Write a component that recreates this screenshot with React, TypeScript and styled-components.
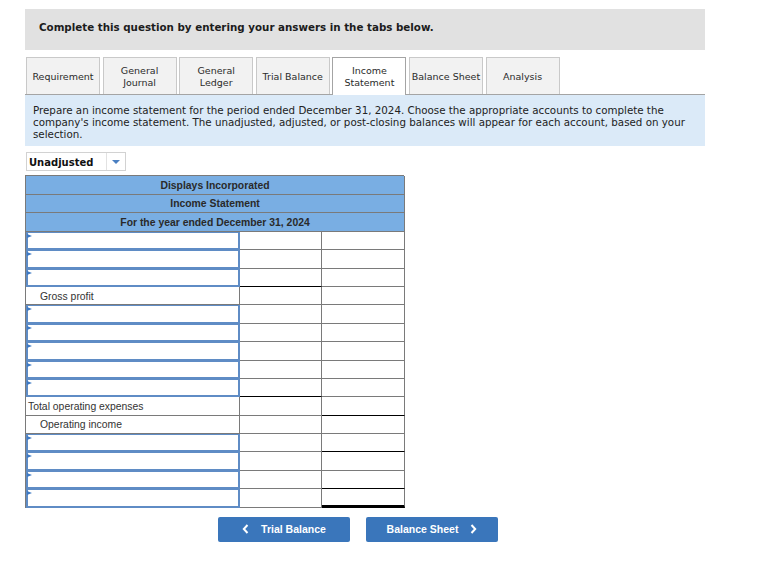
import React from "react";
import styled, { createGlobalStyle, css } from "styled-components";

const GlobalStyle = createGlobalStyle`
  body {
    margin: 0;
    background: #ffffff;
    font-family: "DejaVu Sans", Verdana, sans-serif;
  }
`;

const Page = styled.div`
  width: 680px;
  padding: 9px 0 0 25px;
`;

const Banner = styled.div`
  height: 41px;
  box-sizing: border-box;
  background: #e1e1e1;
  display: flex;
  align-items: center;
  padding: 0 0 6px 14px;
  font-size: 10.3px;
  font-weight: bold;
  color: #1c1c1c;
`;

const TabBar = styled.div`
  margin-top: 7px;
  display: flex;
  gap: 2.6px;
  padding-left: 1px;
  height: 37px;
  border-bottom: 1px solid #a4a4a4;
`;

const Tab = styled.div<{ $active?: boolean }>`
  width: 74px;
  box-sizing: border-box;
  height: 37px;
  padding-top: 1px;
  border: 1px solid #c9c9c9;
  border-bottom: none;
  background: #f2f2f2;
  display: flex;
  align-items: center;
  justify-content: center;
  text-align: center;
  font-size: 9.5px;
  line-height: 12px;
  color: #2b2b2b;
  white-space: pre-line;
  ${(p) =>
    p.$active &&
    css`
      background: #ffffff;
      border-color: #a4a4a4;
      height: 38px;
      position: relative;
      z-index: 1;
    `}
`;

const Instructions = styled.div`
  height: 51px;
  box-sizing: border-box;
  background: #dbeaf8;
  padding: 9px 8px 0 8px;
  font-size: 10.3px;
  line-height: 12px;
  color: #222;
`;

const Select = styled.div`
  margin-top: 6px;
  margin-left: 1px;
  width: 100px;
  height: 19px;
  box-sizing: border-box;
  border: 1px solid #d2d2d2;
  display: flex;
  align-items: center;
  background: #fff;
`;

const SelectText = styled.div`
  flex: 1;
  padding: 1px 0 0 2px;
  font-size: 10px;
  font-weight: bold;
  color: #111;
`;

const SelectArrow = styled.div`
  width: 18px;
  height: 100%;
  border-left: 1px solid #e2e2e2;
  display: flex;
  align-items: center;
  justify-content: center;

  &::after {
    content: "";
    border-left: 4px solid transparent;
    border-right: 4px solid transparent;
    border-top: 4px solid #4a7fc2;
  }
`;

const Sheet = styled.div`
  margin-top: 4px;
  width: 379px;
  display: grid;
  grid-template-columns: 214px 82px 83px;
  border-left: 1px solid #7a7a7a;
  border-top: 1px solid #7a7a7a;
  box-sizing: border-box;
  font-family: "Liberation Sans", Arial, sans-serif;
`;

const HeadCell = styled.div`
  grid-column: 1 / -1;
  height: 18.6px;
  box-sizing: border-box;
  padding-top: 1px;
  background: #79aee3;
  border-right: 1px solid #7a7a7a;
  border-bottom: 1px solid #7a7a7a;
  display: flex;
  align-items: center;
  justify-content: center;
  font-size: 10.4px;
  font-weight: bold;
  color: #2a2a2a;
`;

const LabelCell = styled.div<{ $indent?: boolean }>`
  height: 18.4px;
  box-sizing: border-box;
  border-right: 1px solid #7a7a7a;
  border-bottom: 1px solid #7a7a7a;
  display: flex;
  align-items: center;
  padding-top: 1px;
  padding-left: ${(p) => (p.$indent ? "14px" : "2px")};
  font-size: 10.4px;
  color: #333;
`;

const InputCell = styled.div`
  height: 18.4px;
  box-sizing: border-box;
  border-right: 1px solid #7a7a7a;
  border-bottom: 1px solid #7a7a7a;
  position: relative;

  &::before {
    content: "";
    position: absolute;
    inset: 0 -1px -1px 0;
    border: 2px solid #5f8cc5;
    border-top-width: 1px;
  }

  &::after {
    content: "";
    position: absolute;
    left: 1px;
    top: 2px;
    border-top: 2.5px solid transparent;
    border-bottom: 2.5px solid transparent;
    border-left: 5px solid #3f7ac4;
  }
`;

const AmountCell = styled.div<{ $rule?: "single" | "double" }>`
  height: 18.4px;
  box-sizing: border-box;
  border-right: 1px solid #7a7a7a;
  border-bottom: 1px solid #7a7a7a;
  background: #fff;
  ${(p) =>
    p.$rule === "single" &&
    css`
      border-bottom: 1px solid #000;
    `}
  ${(p) =>
    p.$rule === "double" &&
    css`
      border-bottom: 3px solid #000;
    `}
`;

const Nav = styled.div`
  margin-top: 9px;
  padding-left: 193px;
  display: flex;
  gap: 16px;
`;

const NavButton = styled.button`
  width: 132px;
  height: 25px;
  border: none;
  border-radius: 2px;
  background: #3a76bb;
  color: #fff;
  font-family: "Liberation Sans", Arial, sans-serif;
  font-size: 10.5px;
  font-weight: bold;
  display: flex;
  align-items: center;
  justify-content: center;
  gap: 12px;
  cursor: pointer;
`;

type Row = {
  label?: string;
  indent?: boolean;
  mid?: "single" | "double";
  right?: "single" | "double";
};

const rows: Row[] = [
  {},
  {},
  { mid: "single" },
  { label: "Gross profit", indent: true },
  {},
  {},
  {},
  {},
  { mid: "single" },
  { label: "Total operating expenses", right: "single" },
  { label: "Operating income", indent: true },
  { right: "single" },
  {},
  { right: "single" },
  { right: "double" },
];

const tabs = [
  "Requirement",
  "General\nJournal",
  "General\nLedger",
  "Trial Balance",
  "Income\nStatement",
  "Balance Sheet",
  "Analysis",
];

const Chevron = ({ dir }: { dir: "left" | "right" }) => (
  <svg width="7" height="10" viewBox="0 0 7 10">
    <path
      d={dir === "left" ? "M5.5 1 L1.8 5 L5.5 9" : "M1.5 1 L5.2 5 L1.5 9"}
      fill="none"
      stroke="#fff"
      strokeWidth="2"
    />
  </svg>
);

export default function App() {
  return (
    <Page>
      <GlobalStyle />
      <Banner>Complete this question by entering your answers in the tabs below.</Banner>
      <TabBar>
        {tabs.map((t) => (
          <Tab key={t} $active={t === "Income\nStatement"}>
            {t}
          </Tab>
        ))}
      </TabBar>
      <Instructions>
        Prepare an income statement for the period ended December 31, 2024. Choose the appropriate
        accounts to complete the company's income statement. The unadjusted, adjusted, or
        post-closing balances will appear for each account, based on your selection.
      </Instructions>
      <Select>
        <SelectText>Unadjusted</SelectText>
        <SelectArrow />
      </Select>
      <Sheet>
        <HeadCell>Displays Incorporated</HeadCell>
        <HeadCell>Income Statement</HeadCell>
        <HeadCell>For the year ended December 31, 2024</HeadCell>
        {rows.map((r, i) => (
          <React.Fragment key={i}>
            {r.label ? (
              <LabelCell $indent={r.indent}>{r.label}</LabelCell>
            ) : (
              <InputCell />
            )}
            <AmountCell $rule={r.mid} />
            <AmountCell $rule={r.right} />
          </React.Fragment>
        ))}
      </Sheet>
      <Nav>
        <NavButton>
          <Chevron dir="left" />
          Trial Balance
        </NavButton>
        <NavButton>
          Balance Sheet
          <Chevron dir="right" />
        </NavButton>
      </Nav>
    </Page>
  );
}
